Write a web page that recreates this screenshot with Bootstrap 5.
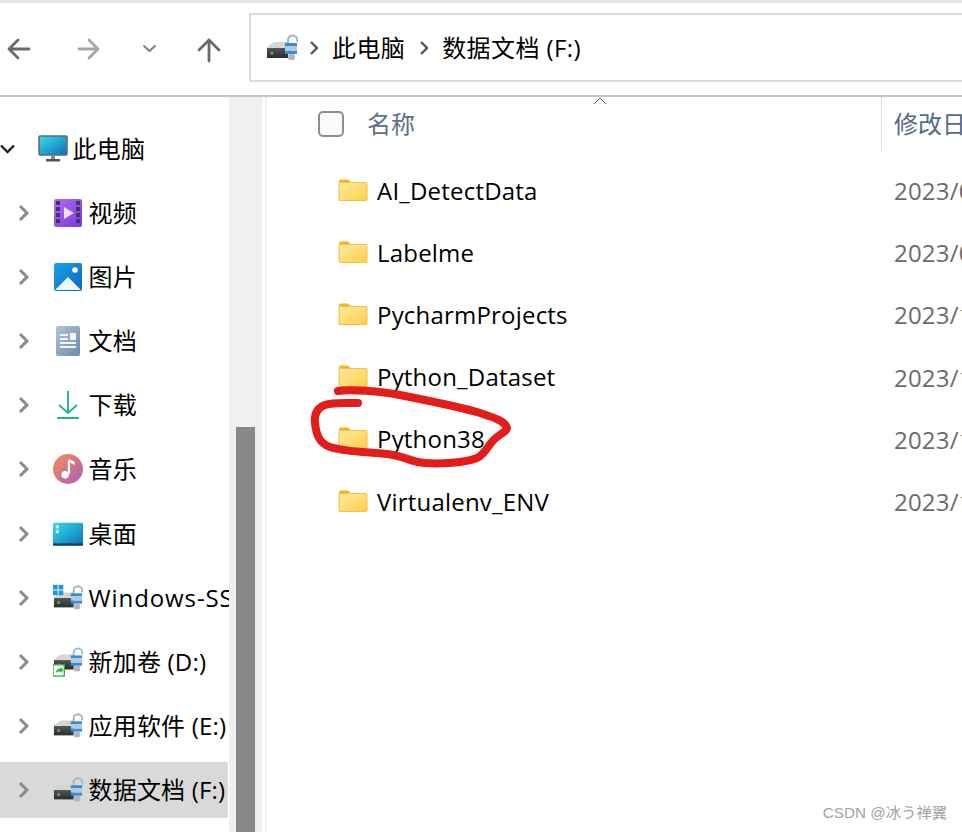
<!DOCTYPE html>
<html lang="zh-CN">
<head>
<meta charset="utf-8">
<title>数据文档 (F:)</title>
<link href="https://cdn.jsdelivr.net/npm/bootstrap@5.3.0/dist/css/bootstrap.min.css" rel="stylesheet">
<style>
html,body{height:832px;overflow:hidden;background:#fff}
body{width:962px;font-family:"Open Sans","Noto Sans CJK SC",sans-serif;font-size:24px;color:#000;position:relative}
.strip{height:3px;background:#e5e5e5}
.toolbar{height:94px;border-bottom:2px solid #c4c4c4}
.navbtns{width:249px;flex:none}
.tb-ico{position:relative;flex:none;display:block}
.addr{height:69px;margin-top:10px;border:2px solid #dcdcdc;border-right:0;padding-left:15px;line-height:1;letter-spacing:.4px}
.addr-drive{width:32px;height:28px;margin-right:12px;flex:none}
.addr-sep{width:8px;height:14px;margin-right:14px;flex:none}
.addr-sep2{margin-left:15px}
.body-area{height:735px}
.side{width:229px;flex:none;padding-top:24px;gap:8.1px;overflow:hidden}
.side-row{height:56px;flex:none;white-space:nowrap;overflow:hidden;padding-left:18px;letter-spacing:.2px}
.side-row.top-row{padding-left:0}
.side-row.sel{background:#d9d9d9;margin-right:1px}
.chev{width:11px;height:18px;flex:none;margin-right:25px}
.top-row .chev{width:15px;height:10px;margin-right:23px}
.side-ico{width:30px;height:30px;flex:none;margin-right:5.500px;margin-left:-1px}
.top-row .side-ico{margin-left:0;margin-right:4.500px}
.wide-latin{letter-spacing:.9px}
.track{width:33px;flex:none;background:#f0f0f0;padding-left:7px}
.thumb{width:19px;height:405px;margin-top:330px;background:#888}
.gutter{width:2px;flex:none;margin-left:3px;background:#f2f2f2}
.files{flex:1;min-width:0;overflow:hidden}
.hdr{height:53px;margin-bottom:10px;position:relative}
.hdr-check{width:26px;height:26px;flex:none;margin-left:51px;margin-top:14px;border:2px solid #8e8e8e;border-radius:5px;background:#fafafa}
.hdr-name{margin-left:23px;margin-top:9px;color:#5c7088;width:514px;flex:none}
.hdr-date{border-left:1px solid #dcdcdc;padding-left:12px;color:#4f6b8a;white-space:nowrap;height:53px;padding-top:9px}
.caret-up{position:absolute;left:326px;top:0}
.file-row{height:62.2px;white-space:nowrap;letter-spacing:.2px}
.fold{width:30px;height:24px;flex:none;margin-left:71px;margin-right:9px;margin-bottom:3px}
.fname{width:504px;flex:none;margin-bottom:1px}
.fdate{color:#6b6b6b;margin-left:13px}
.ink{position:absolute;left:0;top:0;pointer-events:none}
.mark-csdn{position:absolute;right:15px;bottom:10px;font:15.3px "Liberation Sans","Noto Sans CJK SC",sans-serif;color:#a3a3a3}
</style>
</head>
<body>
<svg width="0" height="0" class="position-absolute">
<defs>
<linearGradient id="gFolder" x1="0" y1="0" x2="1" y2="1"><stop offset="0" stop-color="#ffe9a0"/><stop offset="1" stop-color="#ffcf4a"/></linearGradient>
<linearGradient id="gMon" x1="0" y1="0" x2="1" y2="1"><stop offset="0" stop-color="#35dde4"/><stop offset="1" stop-color="#0f70b8"/></linearGradient>
<linearGradient id="gPic" x1="0" y1="0" x2="1" y2="1"><stop offset="0" stop-color="#1ea2e8"/><stop offset="1" stop-color="#0667bd"/></linearGradient>
<linearGradient id="gDoc" x1="0" y1="0" x2="1" y2="1"><stop offset="0" stop-color="#b2c4d8"/><stop offset="1" stop-color="#6d8aa8"/></linearGradient>
<linearGradient id="gVid" x1="0" y1="0" x2="1" y2="1"><stop offset="0" stop-color="#b06ff0"/><stop offset="1" stop-color="#7a37d8"/></linearGradient>
<linearGradient id="gMus" x1="0" y1="0" x2="1" y2="1"><stop offset="0" stop-color="#f48f55"/><stop offset="1" stop-color="#a860b8"/></linearGradient>
<linearGradient id="gDrv" x1="0" y1="0" x2="0" y2="1"><stop offset="0" stop-color="#555"/><stop offset="1" stop-color="#2c2c2c"/></linearGradient>
<symbol id="drive" viewBox="0 0 32 28">
<path d="M1 13 8 8H21V15H1Z" fill="#d5d5d5"/>
<rect x="1" y="14" width="21" height="10" fill="url(#gDrv)"/>
<circle cx="6" cy="19" r="1.5" fill="#35d04a"/>
<path d="M22 11V6a4.6 4.6 0 0 1 9.2 0v2" fill="none" stroke="#9fb6c8" stroke-width="2"/>
<rect x="19" y="9" width="12" height="3" fill="#2a8fdc"/>
<rect x="19" y="12" width="12" height="5" fill="#b5c9da"/>
<rect x="19" y="17" width="12" height="3" fill="#2a8fdc"/>
<rect x="22" y="20" width="7" height="6" rx="2" fill="#b4b8bc"/>
</symbol>
<symbol id="folder" viewBox="0 0 30 24">
<path d="M1 3.500a2 2 0 0 1 2-2h7l4 3.500H1Z" fill="#f5b41a"/>
<rect x="1" y="4.500" width="28" height="18" rx="1" fill="url(#gFolder)" stroke="#f3c04a"/>
</symbol>
<symbol id="chevR" viewBox="0 0 11 18"><path d="M2 2l7 7-7 7" fill="none" stroke="#8a8a8a" stroke-width="3"/></symbol>
</defs>
</svg>

<div class="strip"></div>
<header class="toolbar d-flex">
  <div class="navbtns d-flex">
    <svg class="tb-ico" width="249" height="92" viewBox="0 0 249 92">
      <g fill="none" stroke-linecap="round" stroke-linejoin="round">
        <path d="M10 46H29M18 37l-9 9 9 9" stroke="#6a6a6a" stroke-width="2.800"/>
        <path d="M79 46H98M89 37l9 9-9 9" stroke="#a6a6a6" stroke-width="2.800"/>
        <path d="M144 43l5.500 5 5.500-5" stroke="#7a7a7a" stroke-width="1.800"/>
        <path d="M209 58V37M199 47l10-10 10 10" stroke="#6a6a6a" stroke-width="2.800"/>
      </g>
    </svg>
  </div>
  <nav class="addr flex-grow-1 d-flex align-items-center" aria-label="地址">
    <svg class="addr-drive"><use href="#drive"/></svg>
    <svg class="addr-sep"><path d="M1 1l6 6-6 6" fill="none" stroke="#555" stroke-width="2.400"/></svg>
    <span>此电脑</span>
    <svg class="addr-sep addr-sep2"><path d="M1 1l6 6-6 6" fill="none" stroke="#555" stroke-width="2.400"/></svg>
    <span>数据文档 (F:)</span>
  </nav>
</header>

<div class="body-area d-flex">
  <aside class="side d-flex flex-column">
    <div class="side-row top-row d-flex align-items-center">
      <svg class="chev" viewBox="0 0 15 10"><path d="M1 1.500l6.500 6.500 6.500-6.500" fill="none" stroke="#222" stroke-width="2.400"/></svg>
      <svg class="side-ico" viewBox="0 0 30 30"><rect x="1" y="2" width="28" height="19" rx="1" fill="url(#gMon)" stroke="#5c6b78" stroke-width="1.500"/><rect x="13" y="21" width="4" height="4" fill="#7c8a94"/><rect x="8" y="25" width="14" height="2.500" fill="#4a545c"/></svg>
      <span>此电脑</span>
    </div>
    <div class="side-row d-flex align-items-center">
      <svg class="chev"><use href="#chevR"/></svg>
      <svg class="side-ico" viewBox="0 0 30 30"><rect x="1" y="1" width="28" height="28" rx="2" fill="url(#gVid)"/><g fill="#45306e"><rect x="3" y="3" width="4" height="4"/><rect x="3" y="9" width="4" height="4"/><rect x="3" y="15" width="4" height="4"/><rect x="3" y="21" width="4" height="4"/><rect x="23" y="3" width="4" height="4"/><rect x="23" y="9" width="4" height="4"/><rect x="23" y="15" width="4" height="4"/><rect x="23" y="21" width="4" height="4"/></g><path d="M11 9l10 6-10 6Z" fill="#e8e0f5"/></svg>
      <span>视频</span>
    </div>
    <div class="side-row d-flex align-items-center">
      <svg class="chev"><use href="#chevR"/></svg>
      <svg class="side-ico" viewBox="0 0 30 30"><rect x="1" y="1" width="28" height="28" rx="2" fill="url(#gPic)"/><circle cx="22" cy="8" r="2.800" fill="#fff"/><path d="M2 28 15 15l13 13Z" fill="#eef6fc"/></svg>
      <span>图片</span>
    </div>
    <div class="side-row d-flex align-items-center">
      <svg class="chev"><use href="#chevR"/></svg>
      <svg class="side-ico" viewBox="0 0 30 30"><rect x="3" y="0" width="24" height="30" rx="2" fill="url(#gDoc)"/><g fill="#f2f6fa"><rect x="7" y="8" width="8" height="2"/><rect x="7" y="12" width="8" height="2"/><rect x="17" y="7" width="6" height="7"/><rect x="7" y="16" width="16" height="2"/><rect x="7" y="20" width="16" height="2"/></g></svg>
      <span>文档</span>
    </div>
    <div class="side-row d-flex align-items-center">
      <svg class="chev"><use href="#chevR"/></svg>
      <svg class="side-ico" viewBox="0 0 30 30"><path d="M15 1V23M6 15l9 8 9-8" fill="none" stroke="#22b594" stroke-width="1.900"/><rect x="4" y="27" width="22" height="2" fill="#22b594"/></svg>
      <span>下载</span>
    </div>
    <div class="side-row d-flex align-items-center">
      <svg class="chev"><use href="#chevR"/></svg>
      <svg class="side-ico" viewBox="0 0 32 32"><circle cx="16" cy="16" r="16" fill="url(#gMus)"/><path d="M17 7v14" stroke="#fff" stroke-width="2.400"/><path d="M17 7c1 3 4 3 6 5v-4c-2-1-4-1-6-3Z" fill="#fff"/><circle cx="13" cy="22" r="4" fill="#fff"/></svg>
      <span>音乐</span>
    </div>
    <div class="side-row d-flex align-items-center">
      <svg class="chev"><use href="#chevR"/></svg>
      <svg class="side-ico" viewBox="0 0 32 26"><rect width="32" height="24" y="1" rx="1.500" fill="url(#gMon)"/><rect y="23" width="32" height="2.500" fill="#16425f"/><g fill="#fff"><rect x="3" y="4" width="3" height="3"/><rect x="3" y="9" width="3" height="3"/></g></svg>
      <span>桌面</span>
    </div>
    <div class="side-row d-flex align-items-center">
      <svg class="chev"><use href="#chevR"/></svg>
      <svg class="side-ico" viewBox="0 0 32 28"><use href="#drive"/><g fill="#1e96e6"><rect x="0" y="0" width="5" height="5"/><rect x="6" y="0" width="5" height="5"/><rect x="0" y="6" width="5" height="5"/><rect x="6" y="6" width="5" height="5"/></g></svg>
      <span class="wide-latin">Windows-SSD (C:)</span>
    </div>
    <div class="side-row d-flex align-items-center">
      <svg class="chev"><use href="#chevR"/></svg>
      <svg class="side-ico" viewBox="0 0 32 32"><use href="#drive" width="32" height="28"/><rect x="0" y="19" width="12" height="12" fill="#fff" stroke="#36b045" stroke-width="1.500"/><path d="M3 28c0-3 2-5 5-5v-2l3 3.500L8 28v-2c-2 0-4 0-5 2Z" fill="#36b045"/></svg>
      <span>新加卷 (D:)</span>
    </div>
    <div class="side-row d-flex align-items-center">
      <svg class="chev"><use href="#chevR"/></svg>
      <svg class="side-ico" viewBox="0 0 32 28"><use href="#drive"/></svg>
      <span>应用软件 (E:)</span>
    </div>
    <div class="side-row sel d-flex align-items-center">
      <svg class="chev"><use href="#chevR"/></svg>
      <svg class="side-ico" viewBox="0 0 32 28"><use href="#drive"/></svg>
      <span>数据文档 (F:)</span>
    </div>
  </aside>
  <div class="track"><div class="thumb"></div></div>
  <div class="gutter"></div>
  <main class="files">
    <div class="hdr d-flex">
      <div class="hdr-check"></div>
      <div class="hdr-name">名称</div>
      <div class="hdr-date">修改日期</div>
      <svg class="caret-up" width="14" height="8"><path d="M1 7l6-6 6 6" fill="none" stroke="#666" stroke-width="1"/></svg>
    </div>
    <div class="file-row d-flex align-items-center"><svg class="fold"><use href="#folder"/></svg><span class="fname">AI_DetectData</span><span class="fdate">2023/06/15</span></div>
    <div class="file-row d-flex align-items-center"><svg class="fold"><use href="#folder"/></svg><span class="fname">Labelme</span><span class="fdate">2023/06/15</span></div>
    <div class="file-row d-flex align-items-center"><svg class="fold"><use href="#folder"/></svg><span class="fname">PycharmProjects</span><span class="fdate">2023/11/02</span></div>
    <div class="file-row d-flex align-items-center"><svg class="fold"><use href="#folder"/></svg><span class="fname">Python_Dataset</span><span class="fdate">2023/11/02</span></div>
    <div class="file-row d-flex align-items-center"><svg class="fold"><use href="#folder"/></svg><span class="fname">Python38</span><span class="fdate">2023/11/02</span></div>
    <div class="file-row d-flex align-items-center"><svg class="fold"><use href="#folder"/></svg><span class="fname">Virtualenv_ENV</span><span class="fdate">2023/11/02</span></div>
  </main>
</div>

<svg class="ink" width="962" height="832" viewBox="0 0 962 832"><path d="M338 391C350 389 380 391 400 395S465 408 480 413 505 421 507 428C507 432 497 435 491 443S482 456 477 458C465 463 440 464 425 463S405 456 387 454 345 452 330 447C318 443 316 432 315 423S317 408 325 405 345 403 358 403" fill="none" stroke="#e31c1c" stroke-width="8" stroke-linecap="round" stroke-linejoin="round"/></svg>
<div class="mark-csdn">CSDN @冰う禅翼</div>

<script src="https://cdn.jsdelivr.net/npm/bootstrap@5.3.0/dist/js/bootstrap.bundle.min.js"></script>
</body>
</html>
